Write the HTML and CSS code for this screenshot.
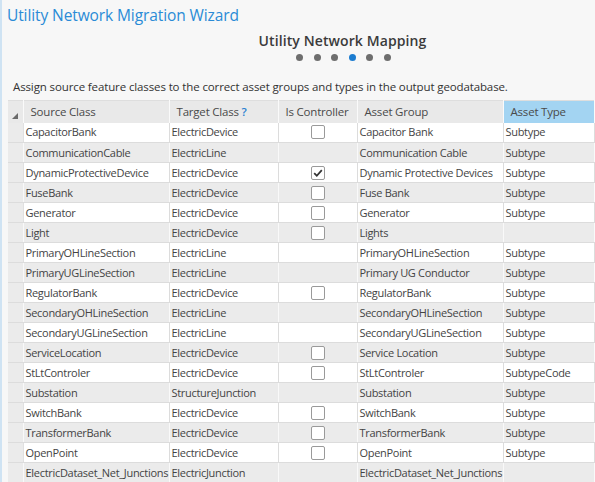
FILE: index.html
```html
<!DOCTYPE html>
<html>
<head>
<meta charset="utf-8">
<link rel="stylesheet" href="styles.css">
</head>
<body>
<div class="page">
  <h1 class="title">Utility Network Migration Wizard</h1>
  <h2 class="step-title">Utility Network Mapping</h2>
  <div class="dots">
    <span class="dot"></span><span class="dot"></span><span class="dot"></span><span class="dot active"></span><span class="dot"></span><span class="dot"></span>
  </div>
  <p class="intro">Assign source feature classes to the correct asset groups and types in the output geodatabase.</p>
  <table class="grid">
    <colgroup>
      <col class="c-gut"><col class="c-src"><col class="c-tgt"><col class="c-ctl"><col class="c-grp"><col class="c-typ">
    </colgroup>
    <thead>
      <tr>
        <th class="gut"><span class="corner"></span></th>
        <th>Source Class</th>
        <th>Target Class <span class="q">?</span></th>
        <th>Is Controller</th>
        <th>Asset Group</th>
        <th class="sel">Asset Type</th>
      </tr>
    </thead>
    <tbody>
      <tr><td class="gut"></td><td>CapacitorBank</td><td>ElectricDevice</td><td class="ctl"><span class="cb"></span></td><td>Capacitor Bank</td><td>Subtype</td></tr>
      <tr><td class="gut"></td><td>CommunicationCable</td><td>ElectricLine</td><td class="ctl"></td><td>Communication Cable</td><td>Subtype</td></tr>
      <tr><td class="gut"></td><td>DynamicProtectiveDevice</td><td>ElectricDevice</td><td class="ctl"><span class="cb checked"><svg viewBox="0 0 14 14" width="14" height="14"><path d="M3.2 7.2 L5.8 9.8 L10.8 4.2" fill="none" stroke="#333" stroke-width="1.8"/></svg></span></td><td>Dynamic Protective Devices</td><td>Subtype</td></tr>
      <tr><td class="gut"></td><td>FuseBank</td><td>ElectricDevice</td><td class="ctl"><span class="cb"></span></td><td>Fuse Bank</td><td>Subtype</td></tr>
      <tr><td class="gut"></td><td>Generator</td><td>ElectricDevice</td><td class="ctl"><span class="cb"></span></td><td>Generator</td><td>Subtype</td></tr>
      <tr><td class="gut"></td><td>Light</td><td>ElectricDevice</td><td class="ctl"><span class="cb"></span></td><td>Lights</td><td></td></tr>
      <tr><td class="gut"></td><td>PrimaryOHLineSection</td><td>ElectricLine</td><td class="ctl"></td><td>PrimaryOHLineSection</td><td>Subtype</td></tr>
      <tr><td class="gut"></td><td>PrimaryUGLineSection</td><td>ElectricLine</td><td class="ctl"></td><td>Primary UG Conductor</td><td>Subtype</td></tr>
      <tr><td class="gut"></td><td>RegulatorBank</td><td>ElectricDevice</td><td class="ctl"><span class="cb"></span></td><td>RegulatorBank</td><td>Subtype</td></tr>
      <tr><td class="gut"></td><td>SecondaryOHLineSection</td><td>ElectricLine</td><td class="ctl"></td><td>SecondaryOHLineSection</td><td>Subtype</td></tr>
      <tr><td class="gut"></td><td>SecondaryUGLineSection</td><td>ElectricLine</td><td class="ctl"></td><td>SecondaryUGLineSection</td><td>Subtype</td></tr>
      <tr><td class="gut"></td><td>ServiceLocation</td><td>ElectricDevice</td><td class="ctl"><span class="cb"></span></td><td>Service Location</td><td>Subtype</td></tr>
      <tr><td class="gut"></td><td>StLtControler</td><td>ElectricDevice</td><td class="ctl"><span class="cb"></span></td><td>StLtControler</td><td>SubtypeCode</td></tr>
      <tr><td class="gut"></td><td>Substation</td><td>StructureJunction</td><td class="ctl"></td><td>Substation</td><td>Subtype</td></tr>
      <tr><td class="gut"></td><td>SwitchBank</td><td>ElectricDevice</td><td class="ctl"><span class="cb"></span></td><td>SwitchBank</td><td>Subtype</td></tr>
      <tr><td class="gut"></td><td>TransformerBank</td><td>ElectricDevice</td><td class="ctl"><span class="cb"></span></td><td>TransformerBank</td><td>Subtype</td></tr>
      <tr><td class="gut"></td><td>OpenPoint</td><td>ElectricDevice</td><td class="ctl"><span class="cb"></span></td><td>OpenPoint</td><td>Subtype</td></tr>
      <tr><td class="gut"></td><td>ElectricDataset_Net_Junctions</td><td>ElectricJunction</td><td class="ctl"></td><td>ElectricDataset_Net_Junctions</td><td></td></tr>
    </tbody>
  </table>
</div>
</body>
</html>
```

FILE: styles.css
```css
html, body {
  margin: 0;
  padding: 0;
  background: #f7f7f7;
}
body {
  font-family: "Open Sans", "Noto Sans", "DejaVu Sans", sans-serif;
  color: #333;
  overflow: hidden;
}
.page {
  border-left: 2px solid #cfe3f3;
  min-height: 482px;
  box-sizing: border-box;
  padding-left: 5px;
}
.title {
  margin: 0;
  padding-top: 4px;
  font-size: 15.5px;
  font-weight: 400;
  color: #2a8bd6;
  line-height: 22px;
  letter-spacing: -0.1px;
}
.step-title {
  margin: 6px 0 0 0;
  text-align: center;
  font-size: 14px;
  font-weight: 600;
  color: #3b3b3b;
  line-height: 18px;
  padding-left: 83px;
  letter-spacing: 0.1px;
}
.dots {
  display: flex;
  justify-content: center;
  gap: 10.6px;
  margin-top: 4px;
  padding-left: 85px;
}
.dot {
  width: 7px;
  height: 7px;
  border-radius: 50%;
  background: #6e6e6e;
}
.dot.active {
  background: #1c7cd0;
}
.intro {
  margin: 18px 0 0 6px;
  font-size: 11.5px;
  line-height: 16px;
  color: #333;
  letter-spacing: -0.12px;
}
.grid {
  margin-top: 5px;
  margin-left: 1px;
  border-collapse: collapse;
  table-layout: fixed;
  width: 586px;
  font-size: 11px;
  letter-spacing: -0.3px;
  color: #444;
}
.c-gut { width: 15px; }
.c-src { width: 146px; }
.c-tgt { width: 109px; }
.c-ctl { width: 79px; }
.c-grp { width: 146px; }
.c-typ { width: 91px; }
.grid th {
  height: 22px;
  padding: 0 0 0 7px;
  text-align: left;
  font-weight: 400;
  font-size: 11.5px;
  letter-spacing: -0.2px;
  color: #4a4a4a;
  background: #e9e9e9;
  border-right: 1px solid #fafafa;
  border-top: 1px solid #dedede;
  white-space: nowrap;
  overflow: hidden;
  box-sizing: border-box;
}
.grid th.gut {
  padding: 0;
  position: relative;
}
.grid th.sel {
  background: #a3d4f2;
}
.q {
  color: #2a7fd0;
  font-weight: 600;
}
.corner {
  position: absolute;
  left: 4px;
  bottom: 4px;
  width: 0;
  height: 0;
  border-left: 6px solid transparent;
  border-bottom: 6px solid #6a6a6a;
}
.grid td {
  height: 20px;
  padding: 0 0 0 2px;
  white-space: nowrap;
  overflow: hidden;
  border-right: 1px solid #dcdcdc;
  border-bottom: 1px solid #dcdcdc;
  background: #fff;
  box-sizing: border-box;
  line-height: 18px;
}
.grid tbody tr:nth-child(even) td {
  background: #ebebeb;
  border-right-color: #f9f9f9;
  border-bottom-color: #dcdcdc;
}
.grid td.gut {
  background: #ebebeb;
  border-right: 1px solid #e0e0e0;
  padding: 0;
}
.grid td.ctl {
  text-align: center;
  padding: 0;
}
.cb {
  display: inline-block;
  width: 14px;
  height: 14px;
  box-sizing: border-box;
  border: 1px solid #9a9a9a;
  border-radius: 2px;
  background: #fff;
  vertical-align: middle;
  position: relative;
  top: -1px;
}
.cb svg {
  display: block;
  margin: -1px;
}
```
